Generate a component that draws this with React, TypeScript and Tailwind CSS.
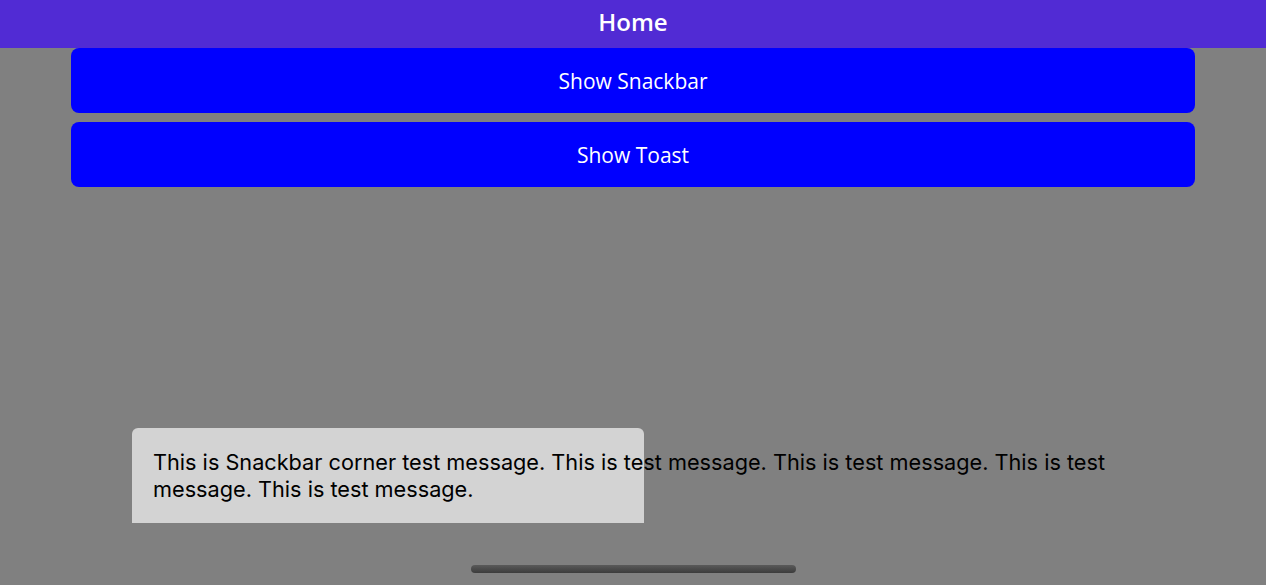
export default function App() {
  return (
    <div className="relative w-[1266px] h-[585px] overflow-hidden bg-[#808080]" style={{ fontFamily: '"Open Sans", sans-serif' }}>
      {/* Navigation bar */}
      <div className="h-12 bg-[#512bd4] flex items-center justify-center pb-[4px]">
        <span className="text-white text-[24px] font-semibold leading-none">Home</span>
      </div>

      <div className="flex flex-col gap-[9px] px-[71px]">
        <button className="h-[65px] pt-[3px] rounded-lg bg-[#0000ff] text-white text-[21px]">Show Snackbar</button>
        <button className="h-[65px] pt-[2px] rounded-lg bg-[#0000ff] text-white text-[21px]">Show Toast</button>
      </div>

      {/* Snackbar */}
      <div className="absolute left-[132px] top-[428px] w-[512px] h-[95px] rounded-t-md bg-[#d3d3d3] overflow-visible">
        <p
          className="absolute left-[21px] top-[21px] w-[1000px] text-[21.7px] leading-[27px] text-black"
          style={{ fontFamily: 'Inter, sans-serif' }}
        >
          This is Snackbar corner test message. This is test message. This is test message. This is test message. This is test message.
        </p>
      </div>

      {/* Home indicator */}
      <div className="absolute left-[471px] top-[565px] w-[325px] h-[8px] rounded-full bg-gradient-to-b from-[#5a5a5a] to-[#3c3c3c]" />
    </div>
  )
}
